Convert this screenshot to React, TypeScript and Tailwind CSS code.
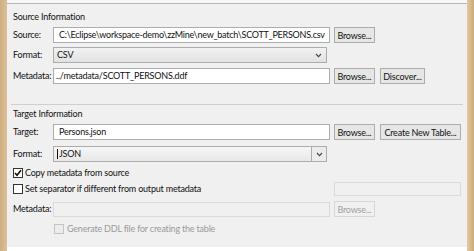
import React from "react";

const font = { fontFamily: 'Lato, "Open Sans", sans-serif' };

function Button({ w, children, disabled }: { w: string; children: React.ReactNode; disabled?: boolean }) {
  return (
    <div
      className={`${w} h-[16px] flex items-center justify-center border text-[9px] leading-none whitespace-nowrap ${
        disabled ? "border-[#d6d6d6] bg-[#f0f0f0] text-[#a0a0a0]" : "border-[#acacac] bg-[#e6e6e6] text-[#111]"
      }`}
    >
      {children}
    </div>
  );
}

function Chevron() {
  return (
    <svg width="7" height="5" viewBox="0 0 7 5">
      <path d="M1 1 L3.5 3.6 L6 1" fill="none" stroke="#444" strokeWidth="1.1" />
    </svg>
  );
}

function Checkbox({ checked, disabled }: { checked?: boolean; disabled?: boolean }) {
  return (
    <div
      className={`w-[10px] h-[10px] border flex items-center justify-center shrink-0 ${
        disabled ? "border-[#c4c4c4] bg-[#ececec]" : "border-[#333] bg-white"
      }`}
    >
      {checked && (
        <svg width="8" height="8" viewBox="0 0 8 8">
          <path d="M1 4 L3 6.3 L7 1.2" fill="none" stroke="#111" strokeWidth="1.6" />
        </svg>
      )}
    </div>
  );
}

export default function App() {
  return (
    <div className="w-[474px] h-[251px] flex bg-[#d4b487] overflow-hidden" style={font}>
      <div className="w-[7px] bg-gradient-to-r from-[#cfae80] to-[#dcc099]" />
      <div className="w-[460px] flex flex-col bg-[#f0f0f0] text-[9px] tracking-[-0.2px] text-[#111] whitespace-nowrap">
        <div className="h-[3px] bg-[#f7f7f7]" />
        <div className="h-px bg-[#b9b9b9]" />
        {/* Source Information */}
        <div className="mt-[7px] pl-[6px] h-[12px] flex items-center">Source Information</div>
        <div className="mt-[4px] pl-[6px] h-[16px] flex items-center">
          <div className="w-[40px]">Source:</div>
          <div className="w-[277px] h-[16px] bg-white border border-[#abadb3] flex items-center pl-[5px] overflow-hidden tracking-[-0.25px]">
            C:\Eclipse\workspace-demo\zzMine\new_batch\SCOTT_PERSONS.csv
          </div>
          <div className="ml-[4px]">
            <Button w="w-[41px]">Browse...</Button>
          </div>
        </div>
        <div className="mt-[4px] pl-[6px] h-[16px] flex items-center">
          <div className="w-[40px]">Format:</div>
          <div className="w-[274px] h-[16px] border border-[#acacac] bg-gradient-to-b from-[#f2f2f2] to-[#e2e2e2] flex items-center pl-[3px] pr-[4px] justify-between">
            <span>CSV</span>
            <Chevron />
          </div>
        </div>
        <div className="mt-[5px] pl-[6px] h-[16px] flex items-center">
          <div className="w-[40px]">Metadata:</div>
          <div className="w-[277px] h-[16px] bg-white border border-[#abadb3] flex items-center pl-[2px]">
            ../metadata/SCOTT_PERSONS.ddf
          </div>
          <div className="ml-[4px]">
            <Button w="w-[41px]">Browse...</Button>
          </div>
          <div className="ml-[5px]">
            <Button w="w-[45px]">Discover...</Button>
          </div>
        </div>
        <div className="mt-[20px] mx-[4px] h-px bg-[#cfcfcf]" />
        {/* Target Information */}
        <div className="mt-[3px] pl-[6px] h-[12px] flex items-center">Target Information</div>
        <div className="mt-[4px] pl-[6px] h-[16px] flex items-center">
          <div className="w-[40px]">Target:</div>
          <div className="w-[277px] h-[16px] bg-white border border-[#abadb3] flex items-center pl-[5px]">
            Persons.json
          </div>
          <div className="ml-[4px]">
            <Button w="w-[41px]">Browse...</Button>
          </div>
          <div className="ml-[5px]">
            <Button w="w-[81px]">Create New Table...</Button>
          </div>
        </div>
        <div className="mt-[6px] pl-[6px] h-[16px] flex items-center">
          <div className="w-[40px]">Format:</div>
          <div className="w-[259px] h-[16px] border border-[#acacac] bg-gradient-to-b from-[#f6f6f6] to-[#e8e8e8] flex items-center pl-[3px]">
            <div className="w-px h-[10px] bg-[#111] mr-px" />
            <span>JSON</span>
          </div>
          <div className="w-[15px] h-[16px] border border-l-0 border-[#acacac] bg-[#ececec] flex items-center justify-center">
            <Chevron />
          </div>
        </div>
        <div className="mt-[5px] pl-[6px] h-[12px] flex items-center gap-[2px]">
          <Checkbox checked />
          <span>Copy metadata from source</span>
        </div>
        <div className="mt-[3px] pl-[6px] pr-[6px] h-[14px] flex items-center justify-between">
          <div className="flex items-center gap-[2px]">
            <Checkbox />
            <span>Set separator if different from output metadata</span>
          </div>
          <div className="w-[127px] h-[14px] border border-[#dadada] bg-[#f0f0f0]" />
        </div>
        <div className="mt-[5px] pl-[6px] h-[16px] flex items-center">
          <div className="w-[40px]">Metadata:</div>
          <div className="w-[277px] h-[15px] border border-[#dadada] bg-[#f0f0f0]" />
          <div className="ml-[4px]">
            <Button w="w-[41px]" disabled>
              Browse...
            </Button>
          </div>
        </div>
        <div className="mt-[6px] pl-[47px] h-[11px] flex items-center gap-[3px] text-[#9a9a9a]">
          <Checkbox disabled />
          <span>Generate DDL file for creating the table</span>
        </div>
        <div className="flex-1" />
        <div className="h-[4px] bg-white" />
      </div>
      <div className="w-[7px] bg-gradient-to-r from-[#e2c9a3] to-[#cba979]" />
    </div>
  );
}
